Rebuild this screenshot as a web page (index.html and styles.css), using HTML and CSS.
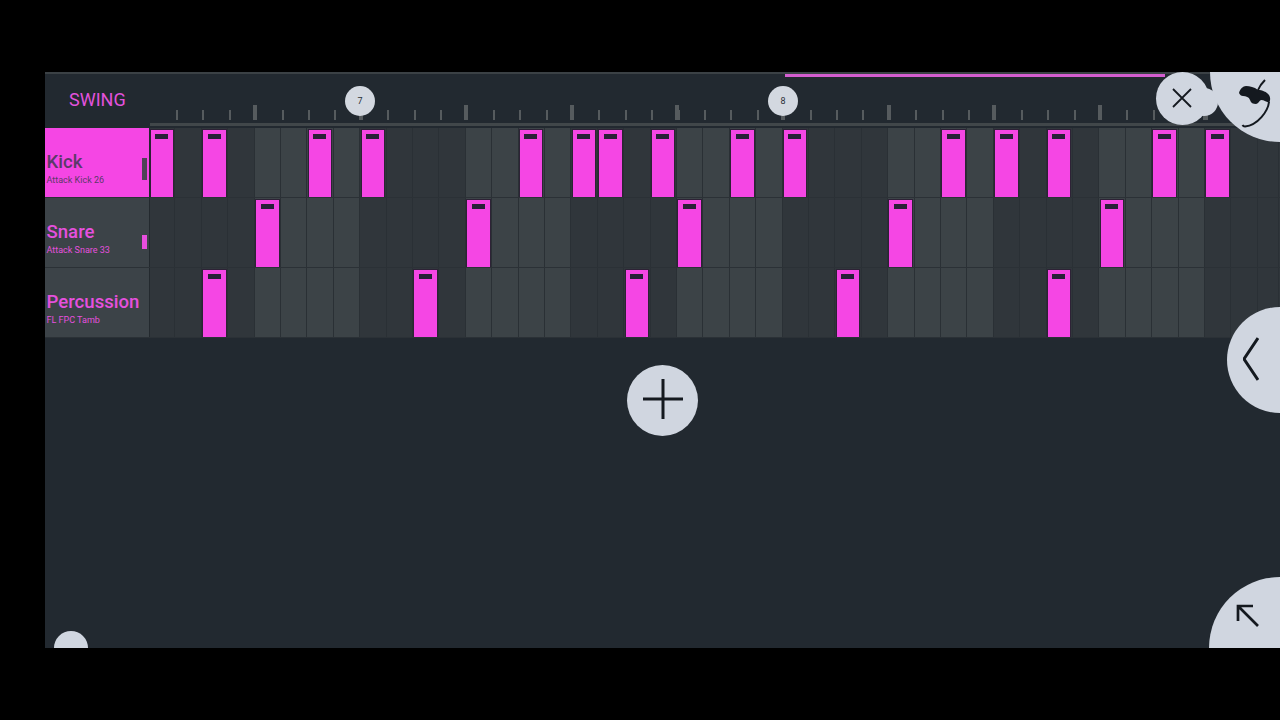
FILE: index.html
```html
<!DOCTYPE html>
<html>
<head>
    <title>Step Sequencer</title>
    <link rel="stylesheet" href="styles.css">
</head>
<body>
    <div id="panel">
        <div id="header">
            <div id="swing">SWING</div>
            <div id="ruler">
                <span class="bar-marker marker-7">7</span>
                <span class="bar-marker marker-8">8</span>
            </div>
        </div>
        <div id="progress"></div>
        <div class="row row-active">
            <div class="channel">
                <div class="channel-name">Kick</div>
                <div class="channel-sample">Attack Kick 26</div>
                <div class="level level-kick"></div>
            </div>
            <div class="steps">
                <div class="note" style="grid-column: 1"></div>
                <div class="note" style="grid-column: 3"></div>
                <div class="note" style="grid-column: 7"></div>
                <div class="note" style="grid-column: 9"></div>
                <div class="note" style="grid-column: 15"></div>
                <div class="note" style="grid-column: 17"></div>
                <div class="note" style="grid-column: 18"></div>
                <div class="note" style="grid-column: 20"></div>
                <div class="note" style="grid-column: 23"></div>
                <div class="note" style="grid-column: 25"></div>
                <div class="note" style="grid-column: 31"></div>
                <div class="note" style="grid-column: 33"></div>
                <div class="note" style="grid-column: 35"></div>
                <div class="note" style="grid-column: 39"></div>
                <div class="note" style="grid-column: 41"></div>
            </div>
        </div>
        <div class="row">
            <div class="channel">
                <div class="channel-name">Snare</div>
                <div class="channel-sample">Attack Snare 33</div>
                <div class="level level-snare"></div>
            </div>
            <div class="steps">
                <div class="note" style="grid-column: 5"></div>
                <div class="note" style="grid-column: 13"></div>
                <div class="note" style="grid-column: 21"></div>
                <div class="note" style="grid-column: 29"></div>
                <div class="note" style="grid-column: 37"></div>
            </div>
        </div>
        <div class="row">
            <div class="channel">
                <div class="channel-name">Percussion</div>
                <div class="channel-sample">FL FPC Tamb</div>
            </div>
            <div class="steps">
                <div class="note" style="grid-column: 3"></div>
                <div class="note" style="grid-column: 11"></div>
                <div class="note" style="grid-column: 19"></div>
                <div class="note" style="grid-column: 27"></div>
                <div class="note" style="grid-column: 35"></div>
            </div>
        </div>

        <div class="round-btn btn-small"></div>
        <div class="round-btn btn-close">
            <svg viewBox="0 0 20 20" width="20" height="20"><path d="M1 1L19 19M19 1L1 19" /></svg>
        </div>
        <div class="round-btn btn-logo">
            <svg viewBox="0 0 55 70" width="55" height="70">
                <path class="fill" d="M14 21C15 17 18 14 21 14C25 14 29 15 33 18C37 18 42 20 44 23C46 26 45 30 44 31C42 30 39 28 36 28C34 29 33 32 31 32C28 32 26 31 25 28C24 25 21 24 18 24C16 24 15 23 14 21Z" />
                <path d="M33 18C35 13 37 11 40 8" />
                <path d="M44 30C43 39 33 53 20 54.5C19 54.5 18 54 17.5 53" />
            </svg>
        </div>
        <div class="round-btn btn-add">
            <svg viewBox="0 0 40 40" width="40" height="40"><path d="M20 0V40M0 20H40" /></svg>
        </div>
        <div class="round-btn btn-back">
            <svg viewBox="0 0 16 44" width="16" height="44"><path d="M15 1L1 22L15 43" /></svg>
        </div>
        <div class="round-btn btn-expand">
            <svg viewBox="0 0 24 24" width="24" height="24"><path d="M3 18V3H18M3 3L23 23" /></svg>
        </div>
        <div class="round-btn btn-corner"></div>
    </div>
</body>
</html>
```

FILE: styles.css
```css
body {
    font-family: Roboto, "Liberation Sans", sans-serif;
    background-color: #000;
    margin: 0;
    padding: 72px 0 72px 45px;
    height: 720px;
    box-sizing: border-box;
    overflow: hidden;
}

#panel {
    position: relative;
    height: 576px;
    background-color: #222930;
    overflow: hidden;
}

#progress {
    position: absolute;
    left: 740px;
    top: 2px;
    width: 380px;
    height: 3px;
    background-color: #d45ed0;
}

#header {
    display: flex;
    height: 54px;
    border-top: 2px solid #3b4145;
    box-sizing: border-box;
}

#swing {
    width: 105px;
    padding: 15px 0 0 24px;
    box-sizing: border-box;
    font-size: 18px;
    line-height: 21px;
    color: #e352dd;
}

#ruler {
    position: relative;
    flex: 1;
    border-bottom: 3px solid #41474a;
    background-image:
        repeating-linear-gradient(to right, #565b5e 0 4px, transparent 4px 105.6px),
        repeating-linear-gradient(to right, #565b5e 0 2px, transparent 2px 26.4px);
    background-size: 100% 15px, 100% 10px;
    background-position: 102.5px calc(100% - 3px), 26px calc(100% - 3px);
    background-repeat: no-repeat;
}

.bar-marker {
    position: absolute;
    top: 12px;
    width: 30px;
    height: 30px;
    border-radius: 50%;
    background-color: #d3d8e0;
    color: #2a3036;
    font-size: 9px;
    line-height: 30px;
    text-align: center;
}

.marker-7 {
    left: 195px;
}

.marker-8 {
    left: 618px;
}

.row {
    display: flex;
    height: 70px;
    border-bottom: 1px solid #2b3136;
    box-sizing: border-box;
}

.row-active {
    margin-top: 2px;
}

.channel {
    position: relative;
    flex: none;
    width: 105px;
    padding: 23px 0 0 1.5px;
    box-sizing: border-box;
    background-color: #3c4348;
    border-right: 1px solid #23292e;
    color: #e550de;
}

.row-active .channel {
    background-color: #f546e4;
    color: #5b3a68;
}

.channel-name {
    font-size: 18.6px;
    line-height: 22px;
    font-weight: 500;
}

.channel-sample {
    font-size: 9px;
    line-height: 12px;
    margin-top: 1px;
}

.level {
    position: absolute;
    right: 2px;
    width: 5px;
    background-color: #e84ede;
}

.level-kick {
    top: 30px;
    height: 22px;
    background-color: #4d4356;
}

.level-snare {
    top: 37px;
    height: 14px;
}

.steps {
    flex: 1;
    display: grid;
    grid-template-columns: repeat(43, 26.4px);
    background-color: #30363b;
    background-image:
        repeating-linear-gradient(to right, #2a3035 0 1px, transparent 1px 26.4px),
        repeating-linear-gradient(to right, transparent 0 105.6px, #3c4347 105.6px 211.2px);
    background-position: -2px 0;
    overflow: hidden;
}

.note {
    position: relative;
    grid-row: 1;
    width: 22.5px;
    margin: 2px 0 0 0.5px;
    background-color: #f546e4;
    box-shadow: 0 0 0 1px #2e2236;
}

/* dark slot at the top of each step */
.note::before {
    content: "";
    position: absolute;
    top: 4px;
    left: 4.5px;
    width: 13px;
    height: 5px;
    background-color: #282038;
}

.round-btn {
    position: absolute;
    border-radius: 50%;
    background-color: #d0d6e0;
}

.round-btn svg {
    position: absolute;
    fill: none;
    stroke: #14191f;
    stroke-width: 2.5;
}

.round-btn svg .fill {
    fill: #14191f;
    stroke: none;
}

.btn-close {
    left: 1111px;
    top: 0;
    width: 53px;
    height: 53px;
}

.btn-close svg {
    left: 16px;
    top: 16px;
    stroke-width: 1.8;
}

.btn-small {
    left: 1145px;
    top: 16px;
    width: 28px;
    height: 28px;
}

.btn-logo {
    left: 1165px;
    top: -70px;
    width: 140px;
    height: 140px;
}

.btn-logo svg {
    left: 15px;
    top: 70px;
    stroke-width: 2;
}

.btn-add {
    left: 582px;
    top: 293px;
    width: 71px;
    height: 71px;
}

.btn-add svg {
    left: 15.5px;
    top: 14px;
    stroke-width: 3;
}

.btn-back {
    left: 1182px;
    top: 235px;
    width: 106px;
    height: 106px;
}

.btn-back svg {
    left: 16px;
    top: 30px;
    stroke-width: 3;
}

.btn-expand {
    left: 1164px;
    top: 505px;
    width: 142px;
    height: 142px;
}

.btn-expand svg {
    left: 26px;
    top: 26px;
    stroke-width: 2.7;
}

.btn-corner {
    left: 9px;
    top: 559px;
    width: 34px;
    height: 34px;
}
```
